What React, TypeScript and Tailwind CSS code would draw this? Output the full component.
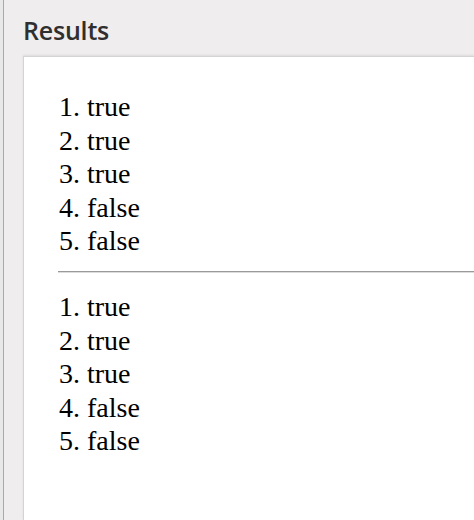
const items = ['true', 'true', 'true', 'false', 'false'];

function ResultList() {
    return (
        <ol className="list-decimal list-outside pl-[63px] text-[28px] leading-[33.6px] text-black" style={{ fontFamily: '"Liberation Serif", "Times New Roman", serif' }}>
            {items.map((item, i) => (
                <li key={i}>{item}</li>
            ))}
        </ol>
    );
}

export default function App() {
    return (
        <div className="w-[474px] h-[520px] overflow-hidden bg-[#e9e8e8] pl-[3px]">
            <div className="h-full border-l border-[#a9a9a9] bg-[#efeded] flex flex-col">
                <div
                    className="h-[56px] pl-[19px] pt-[15px] text-[25px] leading-[30px] font-semibold text-[#2f2f2f] tracking-[-0.2px]"
                    style={{ fontFamily: '"Open Sans", "Noto Sans", sans-serif' }}
                >
                    Results
                </div>
                <div className="flex-1 ml-[19px] bg-white border-t border-l border-[#d4d4d4] shadow-[0_-1px_2px_rgba(0,0,0,0.08)] pt-[33px]">
                    <ResultList />
                    <div className="ml-[34px] mt-[13px] mb-[17px] border-t border-[#9a9a9a] border-b border-b-[#dcdcdc]" />
                    <ResultList />
                </div>
            </div>
        </div>
    );
}
